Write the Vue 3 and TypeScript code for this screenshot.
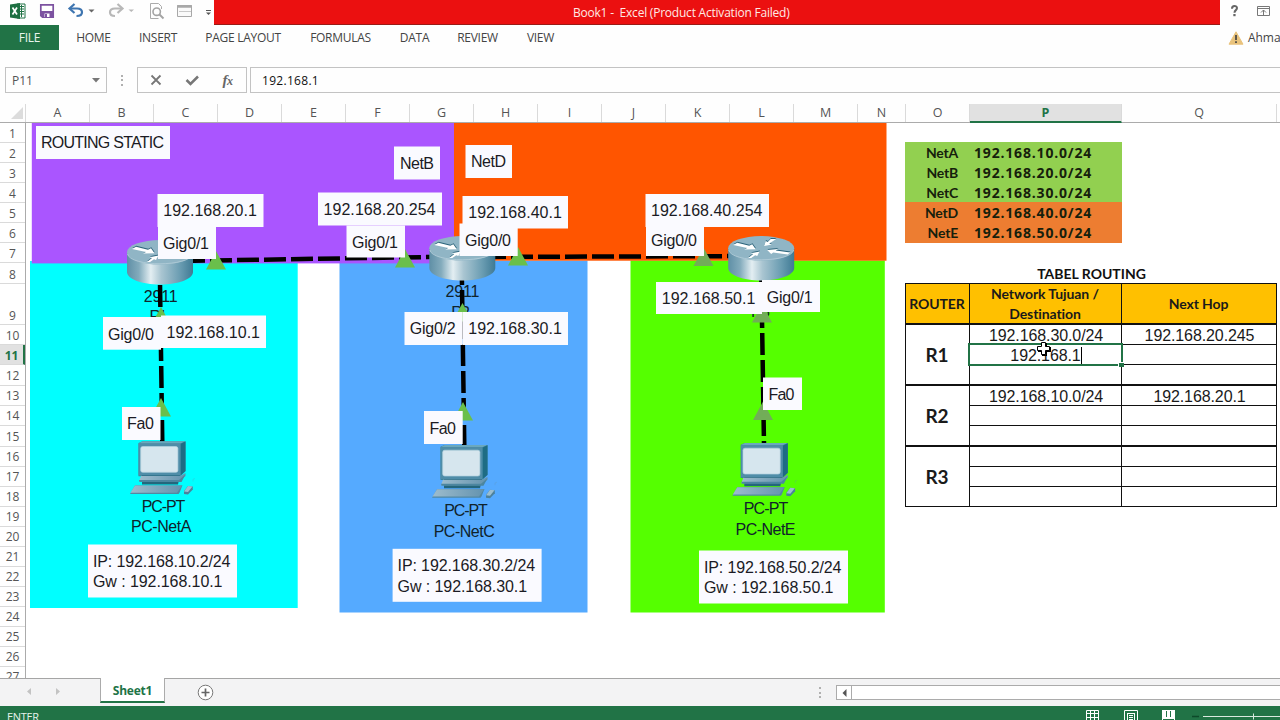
<script setup lang="ts">
interface Column { name: string; width: number }
interface Label { x: number; y: number; w: number; h: number; text: string; tx: number; ty: number; len: number }
interface Caption { text: string; x: number; y: number; len: number }
interface Point { x: number; y: number }

const menu: string[] = ['FILE', 'HOME', 'INSERT', 'PAGE LAYOUT', 'FORMULAS', 'DATA', 'REVIEW', 'VIEW']

const columns: Column[] = [
  ...'ABCDEFGHIJKLM'.split('').map((name) => ({ name, width: 64 })),
  { name: 'N', width: 48 },
  { name: 'O', width: 64 },
  { name: 'P', width: 152 },
  { name: 'Q', width: 155 },
]

const rowBottoms = [142, 162, 182, 202, 222, 242, 262, 283, 324, 344, 364, 385, 405, 425, 446,
  466, 486, 506, 526, 546, 566, 586, 606, 626, 646, 666, 686]
const rows = rowBottoms.map((b, i) => ({ n: i + 1, height: b - (i ? rowBottoms[i - 1] : 122) }))

const nets = [
  { name: 'NetA', ip: '192.168.10.0/24', tone: 'green' },
  { name: 'NetB', ip: '192.168.20.0/24', tone: 'green' },
  { name: 'NetC', ip: '192.168.30.0/24', tone: 'green' },
  { name: 'NetD', ip: '192.168.40.0/24', tone: 'orange' },
  { name: 'NetE', ip: '192.168.50.0/24', tone: 'orange' },
]

const routes = [
  { router: 'R1', entries: [['192.168.30.0/24', '192.168.20.245'], ['192.168.1', ''], ['', '']] },
  { router: 'R2', entries: [['192.168.10.0/24', '192.168.20.1'], ['', ''], ['', '']] },
  { router: 'R3', entries: [['', ''], ['', ''], ['', '']] },
]

const labels: Label[] = [
  { x: 36, y: 126, w: 134, h: 33, text: 'ROUTING STATIC', tx: 41, ty: 148.2, len: 123 },
  { x: 394, y: 146.5, w: 46, h: 33, text: 'NetB', tx: 400, ty: 169.4, len: 34 },
  { x: 465.5, y: 145, w: 46.5, h: 33, text: 'NetD', tx: 471, ty: 167.4, len: 35 },
  { x: 157.5, y: 194, w: 106, h: 33, text: '192.168.20.1', tx: 163.3, ty: 216.4, len: 93.5 },
  { x: 158, y: 227, w: 58, h: 32, text: 'Gig0/1', tx: 163, ty: 249, len: 46 },
  { x: 318, y: 192.5, w: 124, h: 33, text: '192.168.20.254', tx: 323.5, ty: 215.3, len: 112 },
  { x: 346.5, y: 225.5, w: 58.5, h: 32, text: 'Gig0/1', tx: 352, ty: 248, len: 46 },
  { x: 462.5, y: 196, w: 105.5, h: 32.5, text: '192.168.40.1', tx: 468.3, ty: 218, len: 93.5 },
  { x: 459.5, y: 223.5, w: 58.2, h: 32.5, text: 'Gig0/0', tx: 465, ty: 245.5, len: 46 },
  { x: 646, y: 223.5, w: 58, h: 32.5, text: 'Gig0/0', tx: 651, ty: 245.5, len: 46 },
  { x: 645.5, y: 194, w: 123.5, h: 33, text: '192.168.40.254', tx: 651, ty: 216.3, len: 111.5 },
  { x: 656, y: 282, w: 106, h: 32, text: '192.168.50.1', tx: 661.8, ty: 303.7, len: 93.5 },
  { x: 762, y: 280, w: 58, h: 32, text: 'Gig0/1', tx: 766.7, ty: 302.6, len: 46 },
  { x: 103, y: 317, w: 58, h: 32.7, text: 'Gig0/0', tx: 108, ty: 339.5, len: 46 },
  { x: 161, y: 315.5, w: 105, h: 32.5, text: '192.168.10.1', tx: 166.5, ty: 337.5, len: 93.5 },
  { x: 404.5, y: 312, w: 58, h: 33, text: 'Gig0/2', tx: 409.7, ty: 334, len: 46 },
  { x: 462.5, y: 312, w: 105.5, h: 33, text: '192.168.30.1', tx: 468.3, ty: 334, len: 93.5 },
  { x: 122, y: 407, w: 38.5, h: 33, text: 'Fa0', tx: 127, ty: 429, len: 27 },
  { x: 424, y: 411, w: 38.7, h: 33, text: 'Fa0', tx: 429.5, ty: 433.6, len: 26.5 },
  { x: 763, y: 377.5, w: 39, h: 32.5, text: 'Fa0', tx: 768.5, ty: 399.7, len: 26 },
]

const hosts = [
  { x: 88, y: 544.5, ip: 'IP: 192.168.10.2/24', gw: 'Gw : 192.168.10.1' },
  { x: 392.6, y: 548.8, ip: 'IP: 192.168.30.2/24', gw: 'Gw : 192.168.30.1' },
  { x: 699, y: 550.5, ip: 'IP: 192.168.50.2/24', gw: 'Gw : 192.168.50.1' },
]

const captions: Caption[] = [
  { text: '2911', x: 143.7, y: 301.6, len: 34 },
  { text: 'R1', x: 149.5, y: 322, len: 18 },
  { text: '2911', x: 445.5, y: 297.2, len: 34 },
  { text: 'R2', x: 451.3, y: 317.6, len: 18.5 },
  { text: 'R3', x: 751, y: 317, len: 19 },
  { text: 'PC-PT', x: 141.7, y: 511.7, len: 43.5 },
  { text: 'PC-NetA', x: 131, y: 532, len: 60.5 },
  { text: 'PC-PT', x: 444.3, y: 515.7, len: 43.5 },
  { text: 'PC-NetC', x: 433.7, y: 537, len: 61 },
  { text: 'PC-PT', x: 743.7, y: 513.7, len: 44.5 },
  { text: 'PC-NetE', x: 735.5, y: 534.7, len: 60 },
]

const links = [
  { x1: 160, y1: 261.3, x2: 462, y2: 256.5, offset: 4 },
  { x1: 462, y1: 257, x2: 762, y2: 256, offset: 5 },
  { x1: 159.7, y1: 262, x2: 162.3, y2: 443, offset: 4 },
  { x1: 461.6, y1: 258, x2: 464.3, y2: 446, offset: 22 },
  { x1: 761, y1: 257, x2: 764, y2: 444, offset: 5 },
]

const ports = [
  { x: 216, y: 251, dim: false }, { x: 405, y: 249, dim: false }, { x: 518, y: 247, dim: false },
  { x: 703.5, y: 247.5, dim: true }, { x: 161, y: 307, dim: false }, { x: 462.5, y: 303, dim: false },
  { x: 762, y: 304, dim: true }, { x: 161, y: 398, dim: false }, { x: 463, y: 402, dim: false },
  { x: 763, y: 401.5, dim: true },
]

const routers: Point[] = [{ x: 160, y: 240 }, { x: 462.3, y: 236 }, { x: 761.2, y: 236 }]
const pcs: Point[] = [{ x: 0, y: 0.5 }, { x: 302, y: 4.2 }, { x: 602.3, y: 2.2 }]
</script>

<template>
  <div class="app">
    <header class="titlebar">
      <svg class="quick" width="214" height="25" viewBox="0 0 214 25">
        <path d="M17 4h8v14h-8z" fill="#fff" stroke="#217346" />
        <path d="M19 6.500h5M19 9h5M19 11.500h5M19 14h5M21.500 5v12" stroke="#217346" />
        <path d="M10 4.500 20 3v16L10 17.500z" fill="#1d6f42" />
        <path d="m12.500 7.500 4.500 7m0-7-4.500 7" stroke="#fff" stroke-width="1.700" />
        <path d="M40.800 4.800h12.400v12.400H42.500l-1.700-1.500z" fill="#fff" stroke="#7c52a0" stroke-width="1.700" />
        <path d="M41 11h12v6H41z" fill="#7c52a0" /><path d="M44.500 13.500h5V17h-5z" fill="#fff" /><path d="M45 14h2v3h-2z" fill="#7c52a0" />
        <path d="M70.500 8.500H77c3.500 0 5 1.700 5 3.700S80.500 16 76.500 16" fill="none" stroke="#3e75b0" stroke-width="2.200" />
        <path d="m74.500 4-5 4.500 5 4.500" fill="none" stroke="#3e75b0" stroke-width="2.200" />
        <path d="M88.500 9.500h6L91.500 12.500z" fill="#666" />
        <path d="M121.500 8.500H115c-3.500 0-5 1.700-5 3.700s1.500 3.800 5 3.800" fill="none" stroke="#b8b8b8" stroke-width="2.200" />
        <path d="m117.500 4 5 4.500-5 4.500" fill="none" stroke="#b8b8b8" stroke-width="2.200" />
        <path d="M128.500 9.500h5.500L131.300 12z" fill="#b8b8b8" />
        <path d="M161.500 9V6.500l-3-3h-8v15h8" fill="none" stroke="#ababab" />
        <circle cx="156.700" cy="11.700" r="3.700" fill="#fff" stroke="#a4a4a4" stroke-width="1.600" />
        <path d="m159.500 14.500 4 4" stroke="#a4a4a4" stroke-width="2" />
        <path d="M177.500 5.500h14v11h-14z" fill="#fafafa" stroke="#a8a8a8" /><path d="M177 6.500h15" stroke="#a8a8a8" stroke-width="2.500" />
        <path d="M179.500 11.500h11" stroke="#999" stroke-dasharray="1 1" />
        <path d="M206 10.500h5" stroke="#555" /><path d="M206 12.500h5L208.500 15z" fill="#555" />
      </svg>
      <div class="banner"><span>Book1 -&nbsp; Excel (Product Activation Failed)</span></div>
      <svg width="60" height="25" viewBox="1220 0 60 25">
        <path d="M1232 8.700c0-3.500 5-3.300 5-.6 0 2.200-2.500 1.900-2.500 4.600" fill="none" stroke="#666" stroke-width="2" /><path d="M1233.300 14h2.300v2.200h-2.300z" fill="#666" />
        <path d="M1257.500 6.500h12v9h-12zM1257 8.500h13M1263.500 15v-5M1261 12.500l2.500-2.500 2.500 2.500" fill="none" stroke="#777" />
      </svg>
    </header>

    <nav class="menu">
      <span v-for="m in menu" :key="m" class="menu-item" :class="{ file: m === 'FILE' }">{{ m }}</span>
      <div class="account">
        <svg width="16" height="14" viewBox="0 0 16 14"><path d="M8 .8 15 13.200H1z" fill="#e9c37c" stroke="#e9c37c" stroke-linejoin="round" /><path d="M8 4v5M8 10.300v1.700" stroke="#444" stroke-width="1.700" /></svg>
        <span>Ahmad</span>
      </div>
    </nav>

    <div class="formula-bar">
      <div class="name-box"><span>P11</span><svg width="8" height="5" viewBox="0 0 8 5"><path d="M0 0h8L4 4.500z" fill="#777" /></svg></div>
      <i class="grip"></i>
      <div class="actions">
        <svg width="108" height="24" viewBox="138 68 108 24">
          <path d="m151.500 75.500 9 9m0-9-9 9" stroke="#777" stroke-width="1.800" />
          <path d="m186.500 80 4 4 7.500-7.500" fill="none" stroke="#777" stroke-width="2.500" />
          <text x="222.500" y="84.500" class="fx">f</text><text x="227" y="84.500" class="fx small">x</text>
        </svg>
      </div>
      <div class="formula">192.168.1</div>
    </div>

    <div class="col-heads">
      <div class="corner"><svg width="12" height="12" viewBox="0 0 12 12"><path d="M12 0v12H0z" fill="#dcdcdc" /></svg></div>
      <div v-for="c in columns" :key="c.name" class="col" :class="{ active: c.name === 'P' }" :style="{ width: c.width + 'px' }">{{ c.name }}</div>
    </div>

    <main class="sheet">
      <div class="row-heads">
        <div v-for="r in rows" :key="r.n" class="row" :class="{ active: r.n === 11 }" :style="{ height: r.height + 'px' }"><span>{{ r.n }}</span></div>
      </div>

      <svg class="diagram" width="879" height="555" viewBox="26 123 879 555">
        <defs>
          <linearGradient id="side" x1="0" x2="1" y1="0" y2="0">
            <stop offset="0" stop-color="#5f8fa6" /><stop offset=".18" stop-color="#83abbc" /><stop offset=".36" stop-color="#e3eef2" />
            <stop offset=".52" stop-color="#a9c5d1" /><stop offset=".8" stop-color="#6b9db2" /><stop offset="1" stop-color="#3f7a94" />
          </linearGradient>
          <linearGradient id="base" x1="0" x2="1" y1="0" y2="0">
            <stop offset="0" stop-color="#9dbccd" /><stop offset="1" stop-color="#6493ae" />
          </linearGradient>
          <g id="router">
            <path d="M-33 12v20c0 7 15 12.500 33 12.500S33 39 33 32V12z" fill="url(#side)" />
            <ellipse cx="0" cy="12.300" rx="33" ry="12.300" fill="#90b5c5" />
            <path d="M-32.500 14C-30 27 30 27 32.500 14" fill="none" stroke="#b5ced9" stroke-width=".8" />
            <g fill="#2c647b" transform="translate(.3 -1)">
              <path d="m-28 9 4-2.200 12 3 3-1.600 3.500 5-11.500.3 3-1.500z" />
              <path d="m3 10 1.500-5 2 1 3-3h5.500l-7 4.500 2.500 1z" />
              <path d="m6 14 11-1-2.500 1.500 14.500 2-2.500 2-14.500-2-2 1.500z" />
              <path d="M-1.500 15.500-4 20l-2-.8-4 2.800h-3l5-4-2.500-.8z" />
            </g>
            <g fill="#fff">
              <path d="m-28 9 4-2.200 12 3 3-1.600 3.500 5-11.500.3 3-1.500z" />
              <path d="m3 10 1.500-5 2 1 3-3h5.500l-7 4.500 2.500 1z" />
              <path d="m6 14 11-1-2.500 1.500 14.500 2-2.500 2-14.500-2-2 1.500z" />
              <path d="M-1.500 15.500-4 20l-2-.8-4 2.800h-3l5-4-2.500-.8z" />
            </g>
          </g>
          <g id="pc">
            <path d="m138.500 442.500 4-1.700h43v30l-5.500 5h-41.500z" fill="#3b8199" />
            <path d="M138.500 443h41.700l5.300-2.200-43 0z" fill="#6ba8bd" />
            <path d="M180.500 443.500 185.500 441v29.500l-5 4.500z" fill="#1e6c84" />
            <rect x="138.500" y="443" width="42" height="32" fill="#4f8da8" />
            <rect x="140.700" y="446" width="37.200" height="25.800" rx="2" fill="#d6e6ee" stroke="#b4d2df" stroke-width=".7" />
            <path d="M142 475h38l-2 9H142z" fill="#24667c" />
            <path d="M141 475.500h39l5.500-3v3L179 481h-40z" fill="url(#base)" /><path d="M139 479.500h40l6.500-5.500-4 7.500h-42z" fill="#4c86a0" />
            <path d="m135 485 44 0 3.500-.3-3 7.500-1 1.300H130z" fill="#5288a2" /><path d="M135 485h47l-5 7.200h-46.500z" fill="url(#base)" />
            <path d="m188 485.500 4.800.5v3l-4.800 5-4-.5v-3z" fill="#4c819b" /><path d="m188 485.500 4.500.5-4.500 5.500-4-.5z" fill="#9bbed0" />
            <path d="M193 481q-1-3 2-3" fill="none" stroke="#6493ae" stroke-width=".5" opacity=".5" />
          </g>
        </defs>

        <rect x="30" y="261" width="267.700" height="347" fill="#00ffff" />
        <rect x="339.500" y="260.700" width="248" height="351.800" fill="#55aaff" />
        <rect x="630.500" y="260.500" width="254.300" height="352" fill="#55ff00" />
        <rect x="31.800" y="123" width="422.500" height="140.400" fill="#aa55ff" />
        <rect x="454" y="123" width="432.500" height="137.700" fill="#ff5500" />

        <text v-for="(c, i) in captions" :key="'c' + i" class="caption" :x="c.x" :y="c.y" :textLength="c.len">{{ c.text }}</text>
        <line v-for="(l, i) in links" :key="'l' + i" :x1="l.x1" :y1="l.y1" :x2="l.x2" :y2="l.y2" :stroke-dashoffset="l.offset" class="link" />
        <path v-for="(p, i) in ports" :key="'p' + i" :d="`M${p.x} ${p.y}l10 18.500h-20z`" class="port" :class="{ dim: p.dim }" />
        <use v-for="(r, i) in routers" :key="'r' + i" href="#router" :x="r.x" :y="r.y" />
        <use v-for="(p, i) in pcs" :key="'pc' + i" href="#pc" :x="p.x" :y="p.y" />
        <g v-for="(l, i) in labels" :key="'b' + i">
          <rect :x="l.x" :y="l.y" :width="l.w" :height="l.h" class="label-box" />
          <text class="label" :x="l.tx" :y="l.ty" :textLength="l.len">{{ l.text }}</text>
        </g>
        <g v-for="h in hosts" :key="h.ip">
          <rect :x="h.x" :y="h.y" width="149" height="53" class="label-box" />
          <text class="label" :x="h.x + 5" :y="h.y + 22.300" textLength="137.500">{{ h.ip }}</text>
          <text class="label" :x="h.x + 5" :y="h.y + 42.900" textLength="129.500">{{ h.gw }}</text>
        </g>
      </svg>

      <section class="tables">
        <div class="nets">
          <div v-for="n in nets" :key="n.name" class="net" :class="n.tone"><span class="net-name">{{ n.name }}</span><span class="net-ip">{{ n.ip }}</span></div>
        </div>
        <h2>TABEL ROUTING</h2>
        <div class="routing">
          <div class="cell head">ROUTER</div>
          <div class="cell head">Network Tujuan /<br />Destination</div>
          <div class="cell head">Next Hop</div>
          <template v-for="r in routes" :key="r.router">
            <div class="cell router-name" :class="{ last: r.router !== 'R3' }">{{ r.router }}</div>
            <template v-for="(e, i) in r.entries" :key="i">
              <div class="cell" :class="{ last: i === 2 && r.router !== 'R3', editing: e[0] === '192.168.1' }"><span>{{ e[0] }}</span></div>
              <div class="cell" :class="{ last: i === 2 && r.router !== 'R3' }"><span>{{ e[1] }}</span></div>
            </template>
          </template>
          <div class="selection"><i></i></div>
          <svg class="cursor" width="16" height="16" viewBox="0 0 16 16"><path d="M6 2h5v4h4v5h-4v4H6v-4H2V6h4z" fill="#000" /><path d="M5.500 1.500h4v4h4v4h-4v4h-4v-4h-4v-4h4z" fill="#fff" stroke="#000" /></svg>
        </div>
      </section>
    </main>

    <div class="sheet-tabs">
      <div class="arrows"><svg width="100" height="27" viewBox="0 679 100 27"><path d="M31 688v7l-4-3.500zM56 688v7l4-3.500z" fill="#c3c3c3" /></svg></div>
      <div class="tab">Sheet1</div>
      <svg class="add" width="17" height="17" viewBox="0 0 17 17"><circle cx="8.500" cy="8.500" r="7.300" fill="#fff" stroke="#777" /><path d="M8.500 4.500v8M4.500 8.500h8" stroke="#666" stroke-width="1.700" /></svg>
      <i class="grip tabs-grip"></i>
      <div class="scroll"><div class="scroll-button"><svg width="5" height="8" viewBox="0 0 5 8"><path d="M4.500 0v8L.5 4z" fill="#555" /></svg></div></div>
    </div>

    <footer class="status">
      <span>ENTER</span>
      <svg width="200" height="14" viewBox="1080 706 200 14">
        <path d="M1086.500 710.500h12V721h-12zM1086 713.500h13M1086 717.500h13M1090.500 710v10M1094.500 710v10" fill="none" stroke="#fff" />
        <path d="M1124.500 710.500h13V721h-13zM1127.500 713v8M1134.500 713v8M1127 713.500h8M1129 715.500h4M1129 717.500h4M1129 719.500h4" fill="none" stroke="#fff" />
        <path d="M1162 710h13v10h-13z" fill="#fff" /><path d="M1166.500 711v6M1170.500 711v6M1163 719.500h11" stroke="#217346" />
        <path d="M1192 716.500h7" stroke="#0d4a2a" stroke-width="1.500" /><path d="M1203 716.500h77M1253.500 713.500v6" stroke="#d9e9df" />
      </svg>
    </footer>
  </div>
</template>

<style>
html, body { margin: 0; overflow: hidden; }
</style>

<style scoped>
.app { width: 1280px; height: 720px; overflow: hidden; display: flex; flex-direction: column; background: #fefefe; color: #444; font: 12px/1 "Open Sans", "Noto Sans", sans-serif; }
.app * { box-sizing: border-box; }
svg { display: block; flex: none; }
.titlebar { display: flex; height: 25px; flex: none; }
.banner { width: 1006px; height: 25px; background: #eb1010; border-bottom: 1px solid #9a1b16; color: #ffe9e4; display: flex; align-items: center; padding: 2px 0 0 359px; white-space: nowrap; letter-spacing: -.22px; }
.menu { display: grid; grid-template-columns: 59px 69px 60px 110px 85px 63px 63px 63px 1fr; height: 25px; flex: none; }
.menu-item { display: flex; align-items: center; justify-content: center; letter-spacing: -.28px; white-space: nowrap; }
.file { background: #217346; color: #e9f5ee; }
.account { display: flex; align-items: center; justify-content: flex-end; gap: 4px; margin-right: -8px; white-space: nowrap; }
.formula-bar { height: 54px; flex: none; display: flex; align-items: flex-start; padding: 17px 0 0 5px; }
.name-box { width: 102px; height: 26px; border: 1px solid #c3c3c3; display: flex; align-items: center; justify-content: space-between; padding: 1px 6px 0 6px; color: #555; }
.grip { width: 2px; height: 11px; margin: 8px 14px 0 14px; background: repeating-linear-gradient(#b0b0b0 0 2px, transparent 2px 4.5px); }
.actions { width: 110px; height: 26px; border: 1px solid #c3c3c3; margin-right: 3px; }
.fx { font: italic bold 15px "Liberation Serif", serif; fill: #666; }
.fx.small { font-size: 12px; }
.formula { flex: 1; height: 26px; border: 1px solid #c3c3c3; border-right: 0; padding: 7px 0 0 11px; color: #111; letter-spacing: .3px; }
.col-heads { display: flex; height: 19px; flex: none; border-bottom: 1px solid #ababab; width: 1300px; }
.corner { width: 26px; border-right: 1px solid #dadada; padding: 3px 0 0 11px; }
.col { height: 18px; border-right: 1px solid #dadada; display: flex; align-items: center; justify-content: center; font-size: 12.5px; color: #555; flex: none; }
.col.active { background: #e1e1e1; border-bottom: 2px solid #217346; margin-bottom: -1px; height: 19px; font-weight: 700; color: #217346; padding-top: 2px; }
.sheet { height: 555px; flex: none; display: flex; overflow: hidden; background: #fff; }
.row-heads { width: 26px; border-right: 1px solid #ababab; flex: none; }
.row { display: flex; align-items: flex-end; justify-content: center; border-bottom: 1px solid #dadada; padding: 0 0 2px 0; color: #555; }
.row:nth-child(n + 12) { padding-bottom: 3px; }
.row.active { background: #e1e1e1; color: #217346; font-weight: 700; border-right: 2px solid #217346; }
.link { stroke: #000; stroke-width: 4.5; stroke-dasharray: 22 5; }
.port { fill: #6abf4b; }
.port.dim { fill: #72ad58; }
.caption, .label { font: 16px "Liberation Sans", Arial, sans-serif; fill: #1b1b24; }
.caption { fill: #10232b; }
.label-box { fill: #fafaff; }
.tables { padding-top: 19px; width: 375px; flex: none; }
.nets { width: 217px; font: 700 14px/20px Lato, "Open Sans", sans-serif; color: #16200c; }
.net { display: grid; grid-template-columns: 53px 1fr; column-gap: 16px; height: 20px; }
.net:last-child { height: 21px; }
.net-name { text-align: right; line-height: 22px; letter-spacing: -.2px; }
.net-ip { font: 700 14px/22px "Open Sans", sans-serif; letter-spacing: .82px; }
.net.green { background: #92d050; }
.net.orange { background: #ed7d31; }
h2 { margin: 23px 0 0 0; padding-right: 2px; text-align: center; font: 700 14px/16px Lato, "Open Sans", sans-serif; color: #111; height: 17px; }
.routing { position: relative; width: 372px; display: grid; grid-template-columns: 64px 152px 155px; grid-template-rows: 41px 20px 20px 21px 20px 20px 21px 20px 20px 20px; border: solid #111; border-width: 1px 0 0 1px; }
.cell { border: solid #111; border-width: 0 1px 1px 0; display: flex; align-items: center; justify-content: center; text-align: center; font: 16px/18px "Liberation Sans", Arial, sans-serif; color: #1a1a1a; padding: 3px 0 0 1px; letter-spacing: -.1px; white-space: nowrap; }
.cell.head { background: #ffc000; font: 700 14px/20px Lato, "Open Sans", sans-serif; padding: 1px 1px 0 0; border-bottom-width: 2px; letter-spacing: -.1px; }
.cell.router-name { grid-row: span 3; font: 700 19px Lato, "Open Sans", sans-serif; padding: 0 1px 1px 0; letter-spacing: 0; }
.cell.last { border-bottom-width: 2px; }
.editing span { border-right: 1px solid #000; }
.selection { position: absolute; left: 62px; top: 59px; width: 155px; height: 23px; border: 2px solid #217346; }
.selection i { position: absolute; right: -3px; bottom: -3px; width: 6px; height: 5px; background: #217346; border: solid #fff; border-width: 1px 0 0 1px; }
.cursor { position: absolute; left: 130px; top: 57px; }
.sheet-tabs { height: 28px; flex: none; display: flex; align-items: flex-start; background: #f3f3f4; border-top: 1px solid #a5a5a5; }
.tab { width: 65px; height: 25px; margin-top: -1px; background: #fff; border: solid #ababab; border-width: 0 1px; border-bottom: 2px solid #217346; color: #217346; font-weight: 700; display: flex; align-items: center; justify-content: center; padding-top: 3px; letter-spacing: -.2px; }
.add { margin: 5px 0 0 32px; }
.tabs-grip { margin: 8px 15px 0 605px; }
.scroll { flex: 1; height: 15px; margin-top: 6px; border: 1px solid #ababab; border-right: 0; background: #fff; }
.scroll-button { width: 15px; height: 13px; border-right: 1px solid #ababab; display: flex; align-items: center; justify-content: center; }
.status { height: 14px; flex: none; background: #217346; color: #e6f2ea; display: flex; justify-content: space-between; font-size: 11px; }
.status span { padding: 5px 0 0 7px; letter-spacing: -.3px; }
</style>
